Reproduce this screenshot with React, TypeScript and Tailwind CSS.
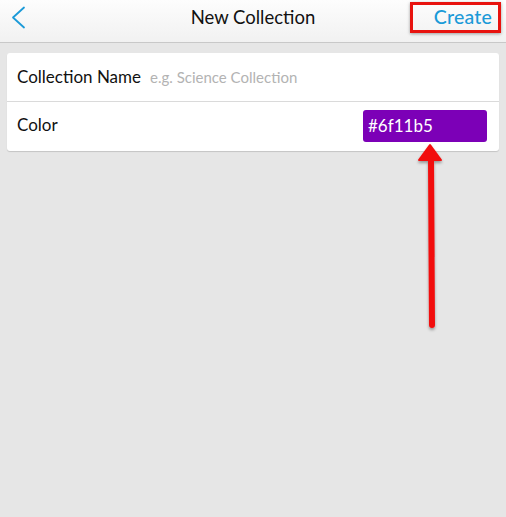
export default function App() {
  return (
    <div className="relative w-[506px] h-[517px] bg-[#e6e6e6] overflow-hidden" style={{ fontFamily: 'Lato, "Open Sans", sans-serif' }}>
      <div className="h-[43px] flex items-start justify-between border-b border-[#c8c8c8] bg-gradient-to-b from-[#fdfdfd] to-[#f1f1f1] relative">
        <svg className="ml-[10px] mt-[6px]" width="18" height="24" viewBox="0 0 18 24">
          <polyline points="14,1.5 3,11.5 14,21.5" fill="none" stroke="#1b9ad8" strokeWidth="1.8" strokeLinecap="round" strokeLinejoin="round" />
        </svg>
        <div className="absolute left-0 right-0 top-[5px] text-center text-[18.5px] leading-[24px] text-[#111] pointer-events-none">New Collection</div>
        <div className="mr-[14px] mt-[4px] text-[19.5px] leading-[26px] font-medium tracking-[0.2px] text-[#1b9ad8]">Create</div>
      </div>

      {/* annotation box */}
      <div className="absolute left-[410px] top-[2px] w-[91px] h-[31px] border-[3px] border-[#e8130f] shadow-[0_1px_3px_rgba(0,0,0,0.35)]" />

      <div className="mx-[7px] mt-[10px] bg-white rounded-[3px] shadow-[0_1px_1px_rgba(0,0,0,0.15)]">
        <div className="h-[49px] flex items-center px-[10px] border-b border-[#dadada]">
          <span className="text-[17px] text-[#111]">Collection Name</span>
          <span className="ml-[9px] text-[15px] text-[#b3b3b3]">e.g. Science Collection</span>
        </div>
        <div className="h-[49px] flex items-center justify-between pl-[10px] pr-[10px]">
          <span className="text-[17px] text-[#111] -mt-[3px]">Color</span>
          <div className="w-[124px] h-[32px] -mt-[1px] mr-[2px] rounded-[3px] bg-[#7c00b7] flex items-center px-[5px] text-[17px] text-white">#6f11b5</div>
        </div>
      </div>

      {/* annotation arrow */}
      <svg className="absolute left-[412px] top-[140px]" width="40" height="195" viewBox="0 0 40 195">
        <defs>
          <filter id="sh" x="-50%" y="-10%" width="200%" height="120%">
            <feDropShadow dx="0" dy="2" stdDeviation="1.5" floodColor="#000" floodOpacity="0.35" />
          </filter>
        </defs>
        <g filter="url(#sh)">
          <line x1="19" y1="20" x2="20" y2="185" stroke="#f20c0c" strokeWidth="6" strokeLinecap="round" />
          <path d="M18 5 L29 20 L7 20 Z" fill="#f20c0c" stroke="#f20c0c" strokeWidth="2" strokeLinejoin="round" />
        </g>
      </svg>
    </div>
  );
}
